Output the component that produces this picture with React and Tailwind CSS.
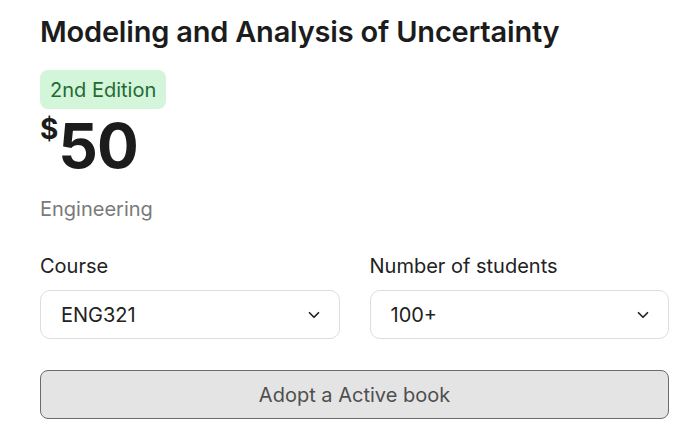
import { ChevronDown } from 'lucide-react';

const Select = ({ label, value }) => (
  <div className="flex flex-col">
    <label className="text-[20px] leading-[24px] text-[#222] mb-[12px]">{label}</label>
    <div className="flex items-center justify-between h-[49px] pl-[20px] pr-[16px] bg-white border border-[#dedede] rounded-[10px]">
      <span className="text-[20px] text-[#222]">{value}</span>
      <ChevronDown className="w-[18px] h-[18px] text-[#222]" strokeWidth={2.25} />
    </div>
  </div>
);

const App = () => {
  return (
    <div className="min-h-screen bg-white font-['Inter',sans-serif] pl-[40px] pr-[31px] pt-[14px]">
      <h1 className="text-[29px] leading-[36px] font-semibold text-[#1c1c1c] tracking-[-0.2px]">
        Modeling and Analysis of Uncertainty
      </h1>
      <div className="mt-[20px] inline-flex items-center h-[39px] px-[10px] rounded-[8px] bg-[#d3f5d9] text-[#1f6b32] text-[20px]">
        2nd Edition
      </div>
      <div className="flex items-start text-[#1c1c1c] font-bold leading-none mt-[2px]">
        <span className="text-[28px] mt-[4px]">$</span>
        <span className="text-[62px] tracking-[-1px] mt-[4px]">50</span>
      </div>
      <p className="mt-[17px] text-[20px] text-[#7a7a7a]">Engineering</p>
      <div className="grid grid-cols-2 gap-[30px] mt-[30px]">
        <Select label="Course" value="ENG321" />
        <Select label="Number of students" value="100+" />
      </div>
      <button className="mt-[31px] w-full h-[49px] bg-[#e4e4e4] border border-[#6b6b6b] rounded-[8px] text-[20px] text-[#4f4f4f]">
        Adopt a Active book
      </button>
    </div>
  );
};

export default App;
